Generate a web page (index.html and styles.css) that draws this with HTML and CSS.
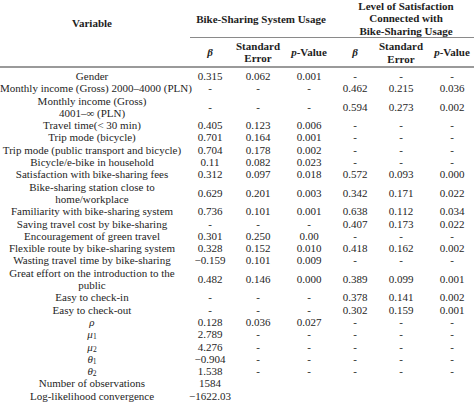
FILE: index.html
```html
<!DOCTYPE html>
<html>
<head>
<meta charset="utf-8">
<link rel="stylesheet" href="styles.css">
</head>
<body>
<table class="tbl">
  <colgroup>
    <col class="c-var"><col class="c-b"><col class="c-se"><col class="c-p"><col class="c-b2"><col class="c-se2"><col class="c-p2">
  </colgroup>
  <thead>
    <tr class="h1">
      <th class="var-h">Variable</th>
      <th colspan="3" class="grp grp-first">Bike-Sharing System Usage</th>
      <th colspan="3" class="grp">Level of Satisfaction<br>Connected with<br>Bike-Sharing Usage</th>
    </tr>
    <tr class="h2">
      <th></th>
      <th><i>β</i></th>
      <th>Standard<br>Error</th>
      <th><i>p</i>-Value</th>
      <th><i>β</i></th>
      <th>Standard<br>Error</th>
      <th><i>p</i>-Value</th>
    </tr>
  </thead>
  <tbody>
    <tr class="first"><td>Gender</td><td>0.315</td><td>0.062</td><td>0.001</td><td>-</td><td>-</td><td>-</td></tr>
    <tr><td>Monthly income (Gross) 2000–4000 (PLN)</td><td>-</td><td>-</td><td>-</td><td>0.462</td><td>0.215</td><td>0.036</td></tr>
    <tr><td>Monthly income (Gross)<br>4001–∞ (PLN)</td><td>-</td><td>-</td><td>-</td><td>0.594</td><td>0.273</td><td>0.002</td></tr>
    <tr><td>Travel time(&lt; 30 min)</td><td>0.405</td><td>0.123</td><td>0.006</td><td>-</td><td>-</td><td>-</td></tr>
    <tr><td>Trip mode (bicycle)</td><td>0.701</td><td>0.164</td><td>0.001</td><td>-</td><td>-</td><td>-</td></tr>
    <tr><td>Trip mode (public transport and bicycle)</td><td>0.704</td><td>0.178</td><td>0.002</td><td>-</td><td>-</td><td>-</td></tr>
    <tr><td>Bicycle/e-bike in household</td><td>0.11</td><td>0.082</td><td>0.023</td><td>-</td><td>-</td><td>-</td></tr>
    <tr><td>Satisfaction with bike-sharing fees</td><td>0.312</td><td>0.097</td><td>0.018</td><td>0.572</td><td>0.093</td><td>0.000</td></tr>
    <tr><td>Bike-sharing station close to<br>home/workplace</td><td>0.629</td><td>0.201</td><td>0.003</td><td>0.342</td><td>0.171</td><td>0.022</td></tr>
    <tr><td>Familiarity with bike-sharing system</td><td>0.736</td><td>0.101</td><td>0.001</td><td>0.638</td><td>0.112</td><td>0.034</td></tr>
    <tr><td>Saving travel cost by bike-sharing</td><td>-</td><td>-</td><td>-</td><td>0.407</td><td>0.173</td><td>0.022</td></tr>
    <tr><td>Encouragement of green travel</td><td>0.301</td><td>0.250</td><td>0.00</td><td>-</td><td>-</td><td>-</td></tr>
    <tr><td>Flexible route by bike-sharing system</td><td>0.328</td><td>0.152</td><td>0.010</td><td>0.418</td><td>0.162</td><td>0.002</td></tr>
    <tr><td>Wasting travel time by bike-sharing</td><td>−0.159</td><td>0.101</td><td>0.009</td><td>-</td><td>-</td><td>-</td></tr>
    <tr><td>Great effort on the introduction to the<br>public</td><td>0.482</td><td>0.146</td><td>0.000</td><td>0.389</td><td>0.099</td><td>0.001</td></tr>
    <tr><td>Easy to check-in</td><td>-</td><td>-</td><td>-</td><td>0.378</td><td>0.141</td><td>0.002</td></tr>
    <tr><td>Easy to check-out</td><td>-</td><td>-</td><td>-</td><td>0.302</td><td>0.159</td><td>0.001</td></tr>
    <tr><td><i>ρ</i></td><td>0.128</td><td>0.036</td><td>0.027</td><td>-</td><td>-</td><td>-</td></tr>
    <tr><td><i>μ</i><sub>1</sub></td><td>2.789</td><td>-</td><td>-</td><td>-</td><td>-</td><td>-</td></tr>
    <tr><td><i>μ</i><sub>2</sub></td><td>4.276</td><td>-</td><td>-</td><td>-</td><td>-</td><td>-</td></tr>
    <tr><td><i>θ</i><sub>1</sub></td><td>−0.904</td><td>-</td><td>-</td><td>-</td><td>-</td><td>-</td></tr>
    <tr><td><i>θ</i><sub>2</sub></td><td>1.538</td><td>-</td><td>-</td><td>-</td><td>-</td><td>-</td></tr>
    <tr><td>Number of observations</td><td>1584</td><td></td><td></td><td></td><td></td><td></td></tr>
    <tr><td>Log-likelihood convergence</td><td>−1622.03</td><td></td><td></td><td></td><td></td><td></td></tr>
  </tbody>
</table>
</body>
</html>
```

FILE: styles.css
```css
html, body {
  margin: 0;
  padding: 0;
  background: #ffffff;
}

.tbl {
  border-collapse: collapse;
  table-layout: fixed;
  width: 474px;
  font-family: "Liberation Serif", "Times New Roman", serif;
  font-size: 11px;
  color: #252525;
}

.c-var { width: 184px; }
.c-b { width: 52px; }
.c-se { width: 44px; }
.c-p { width: 58px; }
.c-b2 { width: 34px; }
.c-se2 { width: 58px; }
.c-p2 { width: 44px; }

.tbl th,
.tbl td {
  padding: 0;
  text-align: center;
  vertical-align: middle;
  line-height: 12.3px;
  white-space: nowrap;
}

.tbl th {
  font-weight: bold;
  color: #1e1e1e;
}

.tbl .h1 th {
  height: 37px;
}

.tbl .h1 .var-h {
  vertical-align: top;
  padding-top: 17px;
  height: 20px;
}

.tbl .grp {
  border-bottom: 1px solid #8a8a8a;
}

.tbl .grp-first {
  border-bottom: none;
  background: linear-gradient(#8a8a8a, #8a8a8a) no-repeat right bottom / calc(100% - 6px) 1px;
}

.tbl .h2 th {
  height: 27px;
  line-height: 12.5px;
  padding-top: 1px;
  border-bottom: 2px solid #9a9a9a;
}

.tbl .first td {
  padding-top: 2px;
}

.tbl sub {
  font-size: 7.5px;
  line-height: 0;
  vertical-align: -1px;
}
```
